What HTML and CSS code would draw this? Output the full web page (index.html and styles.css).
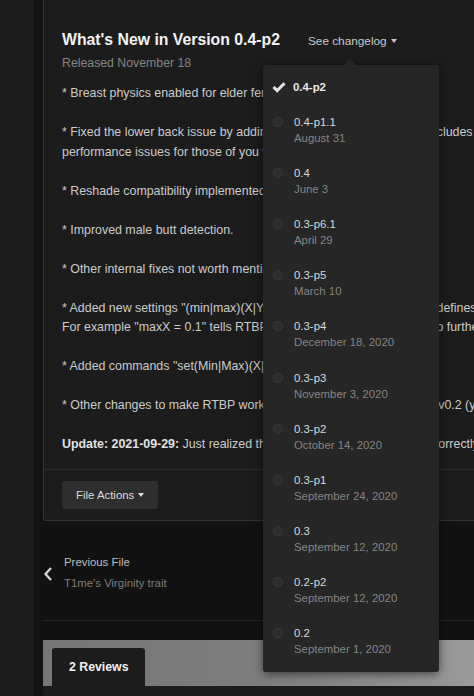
FILE: index.html
```html
<!DOCTYPE html>
<html>
<head>
<meta charset="utf-8">
<link rel="stylesheet" href="styles.css">
</head>
<body>
<div class="sidebar"></div>
<div class="page">
  <div class="box">
    <div class="box-body">
      <div class="head">
        <h1 class="title">What's New in Version 0.4-p2</h1>
        <span class="changelog">See changelog <i class="caret"></i></span>
      </div>
      <div class="meta">Released November 18</div>
      <div class="notes">
        <p>* Breast physics enabled for elder females.</p>
        <p>* Fixed the lower back issue by adding a new collision node which includes extra fixes for<br>performance issues for those of you who had them.</p>
        <p>* Reshade compatibility implemented.</p>
        <p>* Improved male butt detection.</p>
        <p>* Other internal fixes not worth mentioning.</p>
        <p>* Added new settings "(min|max)(X|Y|Z)" to the config file. Each one defines the maximum<br>For example "maxX = 0.1" tells RTBP not to allow the breast bones to further move</p>
        <p>* Added commands "set(Min|Max)(X|Y|Z)" for runtime.</p>
        <p>* Other changes to make RTBP work with SKSE version newer than v0.2 (yes, really)</p>
        <p><b>Update: 2021-09-29:</b> Just realized the config file wasn't being read correctly before</p>
      </div>
    </div>
    <div class="box-foot">
      <button class="btn">File Actions <i class="caret"></i></button>
    </div>
  </div>
  <div class="prev">
    <svg class="chev" width="10" height="16" viewBox="0 0 10 16"><path d="M8 2 L2.5 8 L8 14" fill="none" stroke="#d8d8d8" stroke-width="2.2"/></svg>
    <div class="prev-text">
      <div class="prev-label">Previous File</div>
      <div class="prev-name">T1me's Virginity trait</div>
    </div>
  </div>
  <div class="reviews">
    <div class="tab">2 Reviews</div>
  </div>
  <div class="bottom"></div>
</div>

<div class="menu">
  <div class="item current">
    <svg class="check" width="14" height="12" viewBox="0 0 14 12"><path d="M1.5 6 L5.2 9.6 L12.5 2.2" fill="none" stroke="#e6e6e6" stroke-width="3"/></svg>
    <div class="item-text"><div class="ver">0.4-p2</div></div>
  </div>
  <div class="item"><span class="radio"></span><div class="item-text"><div class="ver">0.4-p1.1</div><div class="date">August 31</div></div></div>
  <div class="item"><span class="radio"></span><div class="item-text"><div class="ver">0.4</div><div class="date">June 3</div></div></div>
  <div class="item"><span class="radio"></span><div class="item-text"><div class="ver">0.3-p6.1</div><div class="date">April 29</div></div></div>
  <div class="item"><span class="radio"></span><div class="item-text"><div class="ver">0.3-p5</div><div class="date">March 10</div></div></div>
  <div class="item"><span class="radio"></span><div class="item-text"><div class="ver">0.3-p4</div><div class="date">December 18, 2020</div></div></div>
  <div class="item"><span class="radio"></span><div class="item-text"><div class="ver">0.3-p3</div><div class="date">November 3, 2020</div></div></div>
  <div class="item"><span class="radio"></span><div class="item-text"><div class="ver">0.3-p2</div><div class="date">October 14, 2020</div></div></div>
  <div class="item"><span class="radio"></span><div class="item-text"><div class="ver">0.3-p1</div><div class="date">September 24, 2020</div></div></div>
  <div class="item"><span class="radio"></span><div class="item-text"><div class="ver">0.3</div><div class="date">September 12, 2020</div></div></div>
  <div class="item"><span class="radio"></span><div class="item-text"><div class="ver">0.2-p2</div><div class="date">September 12, 2020</div></div></div>
  <div class="item"><span class="radio"></span><div class="item-text"><div class="ver">0.2</div><div class="date">September 1, 2020</div></div></div>
</div>
</body>
</html>
```

FILE: styles.css
```css
html, body {
  margin: 0;
  padding: 0;
  height: 696px;
  overflow: hidden;
}
body {
  display: flex;
  background: #1c1c1c;
  font-family: "Liberation Sans", Arial, sans-serif;
  color: #cbcbcb;
}
.sidebar {
  width: 34px;
  flex: none;
  background: #1c1c1c;
}
.page {
  flex: 1;
  min-width: 0;
  background: #121212;
  padding-left: 9px;
  overflow: hidden;
  display: flex;
  flex-direction: column;
}
.box {
  width: 700px;
  background: #1c1c1c;
  border: 1px solid #333;
  border-top: none;
  border-radius: 0 0 0 3px;
}
.box-body {
  padding: 29px 18px 14px 18px;
}
.head {
  display: flex;
  align-items: baseline;
}
.title {
  margin: 0;
  font-size: 15.8px;
  line-height: 22px;
  font-weight: bold;
  color: #f2f2f2;
}
.changelog {
  margin-left: 28px;
  font-size: 11.8px;
  color: #c8c8c8;
}
.caret {
  display: inline-block;
  width: 0;
  height: 0;
  border-left: 3.5px solid transparent;
  border-right: 3.5px solid transparent;
  border-top: 4px solid currentColor;
  vertical-align: 2px;
  margin-left: 1px;
}
.meta {
  margin-top: 2px;
  font-size: 12.3px;
  line-height: 20px;
  color: #858585;
}
.notes {
  margin-top: 11px;
  font-size: 12.4px;
  line-height: 19.5px;
  white-space: nowrap;
}
.notes p {
  margin: 0 0 19.5px 0;
}
.notes p:last-child {
  margin-bottom: 0;
}
.notes b {
  color: #e0e0e0;
}
.box-foot {
  border-top: 1px solid #2c2c2c;
  padding: 11px 18px;
}
.btn {
  display: block;
  height: 28px;
  padding: 0 14px;
  background: #2e2e2e;
  border: none;
  border-radius: 3px;
  color: #dcdcdc;
  font-family: "Liberation Sans", Arial, sans-serif;
  font-size: 11.4px;
}
.prev {
  display: flex;
  align-items: center;
  padding: 31px 0 27px 0;
  border-bottom: 1px solid #232323;
}
.chev {
  margin-left: 0;
  margin-right: 11px;
  margin-top: 4px;
}
.prev-label {
  font-size: 11.4px;
  line-height: 20px;
  color: #bdbdbd;
}
.prev-name {
  font-size: 11.4px;
  line-height: 20px;
  margin-top: 1px;
  color: #7e7e7e;
}
.reviews {
  margin-top: 19px;
  height: 46px;
  background: linear-gradient(90deg, #767676 0%, #7d7d7d 50%, #9a9a9a 100%);
  display: flex;
  align-items: flex-end;
  padding-left: 9px;
}
.tab {
  height: 38px;
  padding: 0 17px;
  background: #1c1c1c;
  border-radius: 3px 3px 0 0;
  color: #f0f0f0;
  font-weight: bold;
  font-size: 12.3px;
  line-height: 38px;
}
.bottom {
  flex: 1;
  background: #1c1c1c;
}
.menu {
  position: absolute;
  left: 263px;
  top: 65px;
  width: 176px;
  height: 607px;
  box-sizing: border-box;
  background: #262626;
  border-radius: 3px;
  box-shadow: 0 2px 10px rgba(0,0,0,0.55);
  padding-top: 4px;
}
.menu::before {
  content: "";
  position: absolute;
  top: -6px;
  left: 81px;
  border-left: 6px solid transparent;
  border-right: 6px solid transparent;
  border-bottom: 6px solid #262626;
}
.item {
  display: flex;
  align-items: flex-start;
  padding: 10px 10px 9.1px 10px;
}
.item.current {
  align-items: center;
}
.check {
  width: 14px;
  margin-right: 7px;
  margin-left: -1px;
}
.radio {
  width: 10px;
  height: 10px;
  box-sizing: border-box;
  margin: 3px 11px 0 0;
  border-radius: 50%;
  border: 1px solid #3a3a3a;
  background: #2c2c2c;
  flex: none;
}
.ver {
  font-size: 11.4px;
  line-height: 16px;
  color: #d8d8d8;
}
.current .ver {
  font-weight: bold;
  color: #e8e8e8;
}
.date {
  font-size: 11.4px;
  line-height: 16px;
  color: #858585;
}
```
